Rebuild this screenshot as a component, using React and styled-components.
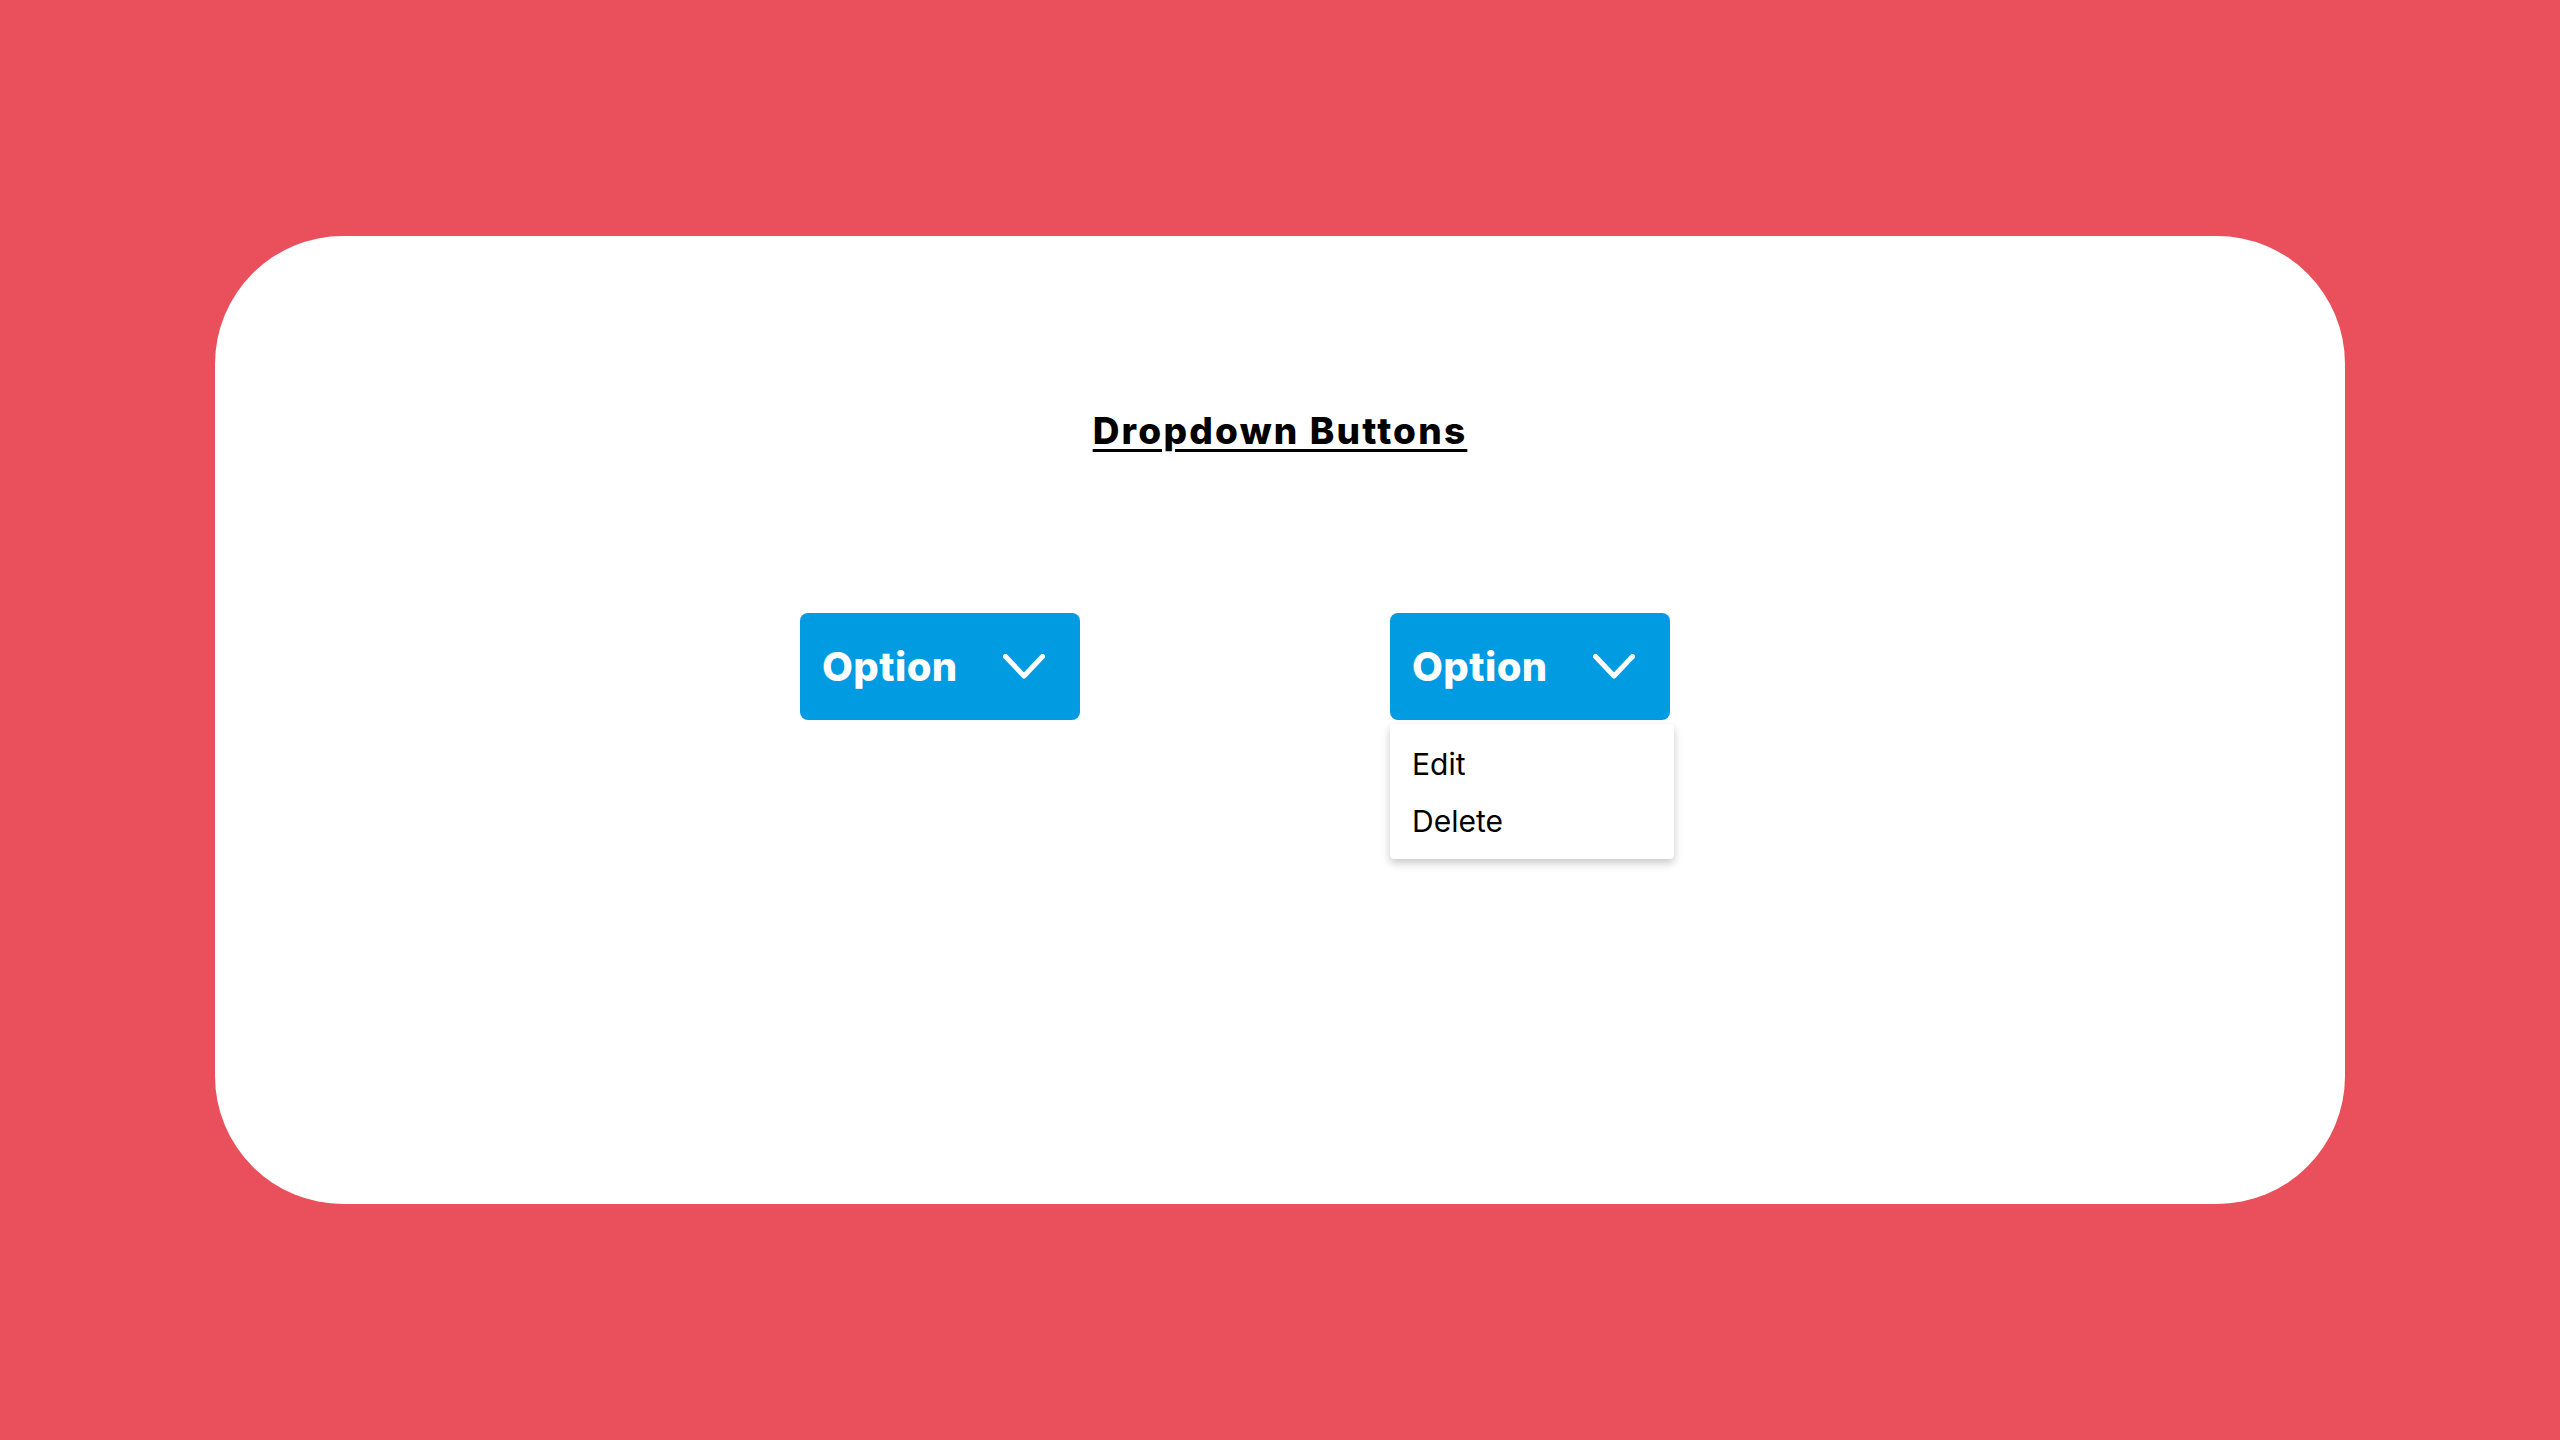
import React from "react";
import styled, { createGlobalStyle } from "styled-components";

const Global = createGlobalStyle`
  html, body { margin: 0; padding: 0; }
  body { background: #e9505c; font-family: "Inter", "Liberation Sans", sans-serif; }
`;

const Page = styled.div`
  min-height: 100vh;
  display: flex;
  align-items: center;
  justify-content: center;
`;

const Card = styled.div`
  width: 2130px;
  height: 968px;
  background: #ffffff;
  border-radius: 128px;
  display: flex;
  flex-direction: column;
  align-items: center;
  padding-top: 172px;
  box-sizing: border-box;
`;

const Title = styled.h1`
  margin: 0;
  font-size: 37px;
  font-weight: 800;
  letter-spacing: 2.2px;
  color: #000;
  text-decoration: underline;
  text-decoration-thickness: 3px;
  text-underline-offset: 5px;
`;

const Row = styled.div`
  margin-top: 160px;
  display: flex;
  gap: 310px;
  padding-right: 90px;
`;

const Dropdown = styled.div`
  position: relative;
  width: 280px;
`;

const Button = styled.button`
  width: 280px;
  height: 107px;
  border: none;
  border-radius: 8px;
  background: #009be1;
  color: #fff;
  font-family: "Inter", "Liberation Sans", sans-serif;
  font-size: 40px;
  font-weight: 800;
  letter-spacing: 0.4px;
  display: flex;
  align-items: center;
  justify-content: space-between;
  padding: 0 35px 0 22px;
  box-sizing: border-box;
  cursor: pointer;
`;

const Menu = styled.ul`
  position: absolute;
  top: 111px;
  left: 0;
  width: 284px;
  margin: 0;
  padding: 12px 0 9px;
  list-style: none;
  background: #fff;
  border-radius: 4px;
  box-shadow: 0 4px 8px rgba(0, 0, 0, 0.22);
`;

const Item = styled.li`
  font-size: 30px;
  line-height: 57px;
  color: #000;
  padding-left: 22px;
`;

const Chevron = () => (
  <svg width="42" height="25" viewBox="0 0 42 25" fill="none">
    <polyline
      points="2.5,2.5 21,22 39.5,2.5"
      stroke="#fff"
      strokeWidth="5"
      strokeLinecap="round"
      strokeLinejoin="round"
    />
  </svg>
);

export default function App() {
  return (
    <>
      <Global />
      <Page>
        <Card>
          <Title>Dropdown Buttons</Title>
          <Row>
            <Dropdown>
              <Button>
                Option <Chevron />
              </Button>
            </Dropdown>
            <Dropdown>
              <Button>
                Option <Chevron />
              </Button>
              <Menu>
                <Item>Edit</Item>
                <Item>Delete</Item>
              </Menu>
            </Dropdown>
          </Row>
        </Card>
      </Page>
    </>
  );
}
